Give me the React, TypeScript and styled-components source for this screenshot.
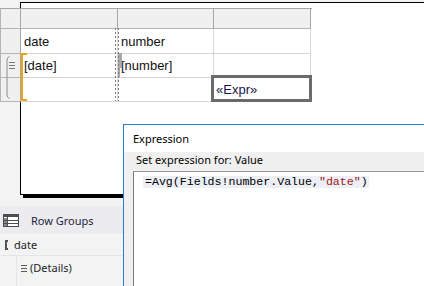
import { FC } from 'react';
import styled, { createGlobalStyle } from 'styled-components';

const GlobalStyle = createGlobalStyle`
  html, body {
    margin: 0;
    padding: 0;
  }
  body {
    width: 424px;
    height: 286px;
    overflow: hidden;
    background: #f3f3f3;
    font-family: 'Noto Sans', 'Open Sans', sans-serif;
  }
`;

type Tone = 'handle' | 'body';

const MenuLines: FC<{ color?: string }> = ({ color = '#7a7a7a' }) => (
  <svg width="6" height="7" viewBox="0 0 6 7">
    <rect x="0" y="0" width="6" height="1" fill={color} />
    <rect x="0" y="3" width="6" height="1" fill={color} />
    <rect x="0" y="6" width="6" height="1" fill={color} />
  </svg>
);

const GroupsIcon = () => (
  <svg width="16" height="13" viewBox="0 0 16 13">
    <rect x="0.5" y="0.5" width="15" height="12" fill="#fff" stroke="#4d4d4d" />
    <rect x="0" y="0" width="16" height="3" fill="#4d4d4d" />
    <rect x="4" y="0" width="1" height="13" fill="#4d4d4d" />
    <rect x="0" y="6" width="16" height="1" fill="#4d4d4d" />
    <rect x="0" y="9" width="16" height="1" fill="#4d4d4d" />
    <rect x="1" y="4" width="3" height="2" fill="#8a8a8a" />
    <rect x="1" y="7" width="3" height="2" fill="#8a8a8a" />
    <rect x="1" y="10" width="3" height="2" fill="#8a8a8a" />
  </svg>
);

const App = () => (
  <Screen>
    <GlobalStyle />
    <Surface>
      <ReportBody>
        <Tablix>
          <Cell $tone="handle" />
          <Cell $tone="handle" />
          <Cell $tone="handle" />
          <Cell $tone="handle" />

          <Cell $tone="handle" />
          <Cell $tone="body">date</Cell>
          <Cell $tone="body">number</Cell>
          <Cell $tone="body" />

          <Cell $tone="handle">
            <HandleIcon>
              <MenuLines />
            </HandleIcon>
          </Cell>
          <Cell $tone="body">[date]</Cell>
          <Cell $tone="body">[number]</Cell>
          <Cell $tone="body" />

          <Cell $tone="handle" />
          <Cell $tone="body" />
          <Cell $tone="body" />
          <ExprCell>«Expr»</ExprCell>

          <RowBracket width="6" height="43" viewBox="0 0 6 43">
            <path d="M4.5 0.5 Q2 1.5 2 4 L2 39 Q2 41.5 4.5 42.5" fill="none" stroke="#8c8c8c" />
          </RowBracket>
          <GroupBracket />
          <ColumnMarker />
          <DottedGuide $left={114} />
          <DottedGuide $left={117} />
          <SelectionFrame />
        </Tablix>
      </ReportBody>
    </Surface>

    <GroupsPanel>
      <PanelHeader>
        <GroupsIcon />
        <PanelTitle>Row Groups</PanelTitle>
      </PanelHeader>
      <GroupRow>
        <GroupGlyph />
        <GroupLabel>date</GroupLabel>
      </GroupRow>
      <DetailsRow>
        <MenuLines color="#5a5a5a" />
        <GroupLabel>(Details)</GroupLabel>
      </DetailsRow>
    </GroupsPanel>

    <Dialog>
      <DialogTitle>Expression</DialogTitle>
      <DialogContent>
        <FieldLabel>Set expression for: Value</FieldLabel>
        <CodeBox>
          <CodeLine>
            =Avg(Fields!number.Value,<CodeString>"date"</CodeString>)
          </CodeLine>
        </CodeBox>
      </DialogContent>
    </Dialog>
  </Screen>
);

export default App;

const Screen = styled.div`
  position: relative;
  width: 424px;
  height: 286px;
  overflow: hidden;
  display: flex;
  flex-direction: column;
  background: #f3f3f3;
`;

const Surface = styled.div`
  flex: none;
  height: 206px;
  box-sizing: border-box;
  padding: 2px 0 0 20px;
`;

const ReportBody = styled.div`
  width: 520px;
  height: 193px;
  box-sizing: border-box;
  border: 1px solid #000;
  box-shadow: 3px 3px 0 #000;
  background: #fff;
  padding-top: 5px;
`;

const Tablix = styled.div`
  position: relative;
  margin-left: -21px;
  width: 311px;
  display: grid;
  grid-template-columns: 20px 97px 96px 97px;
  grid-template-rows: 20px 25px 24px 24px;
  border-top: 1px solid #a6a6a6;
  border-left: 1px solid #b4b4b4;
  font-family: 'Liberation Sans', Arial, sans-serif;
  font-size: 13px;
  color: #111;
`;

const Cell = styled.div<{ $tone: Tone }>`
  box-sizing: border-box;
  display: flex;
  align-items: center;
  padding-left: 3px;
  white-space: nowrap;
  background: ${p => (p.$tone === 'handle' ? '#f0f0f0' : '#fff')};
  border-right: 1px solid ${p => (p.$tone === 'handle' ? '#a6a6a6' : '#d6d6d6')};
  border-bottom: 1px solid ${p => (p.$tone === 'handle' ? '#b4b4b4' : '#d6d6d6')};
`;

const ExprCell = styled(Cell).attrs({ $tone: 'body' as Tone })`
  padding-left: 2px;
  color: #14144a;
`;

const HandleIcon = styled.span`
  display: flex;
  margin-left: 5px;
`;

const RowBracket = styled.svg`
  position: absolute;
  left: 4px;
  top: 47px;
`;

const GroupBracket = styled.div`
  position: absolute;
  left: 20px;
  top: 44px;
  width: 6px;
  height: 48px;
  box-sizing: border-box;
  border: 2px solid #eea319;
  border-right: none;
`;

const ColumnMarker = styled.div`
  position: absolute;
  left: 117px;
  top: 44px;
  width: 4px;
  height: 24px;
  background: linear-gradient(to right, #a8a8a8 0 2px, transparent 2px) no-repeat,
    linear-gradient(#a8a8a8, #a8a8a8) 0 0 / 4px 15px no-repeat;
`;

const DottedGuide = styled.div<{ $left: number }>`
  position: absolute;
  left: ${p => p.$left}px;
  top: 19px;
  width: 1px;
  height: 73px;
  background: repeating-linear-gradient(to bottom, #7c7c7c 0 2px, transparent 2px 4px);
`;

const SelectionFrame = styled.div`
  position: absolute;
  left: 210px;
  top: 66px;
  width: 101px;
  height: 27px;
  box-sizing: border-box;
  border: 3px solid #6b6b6b;
`;

const GroupsPanel = styled.div`
  flex: 1;
  display: flex;
  flex-direction: column;
  background: #f3f3f3;
  font-size: 11px;
  color: #1e1e1e;
`;

const PanelHeader = styled.div`
  height: 28px;
  display: flex;
  align-items: center;
  padding-left: 3px;
  background: #ececf0;
  border-bottom: 1px solid #f8f8f8;
`;

const PanelTitle = styled.span`
  margin-left: 12px;
  color: #1e1e3a;
`;

const GroupRow = styled.div`
  height: 20px;
  display: flex;
  align-items: center;
  padding-left: 5px;
  border-bottom: 1px solid #e4e4ea;
`;

const GroupGlyph = styled.span`
  width: 3px;
  height: 10px;
  box-sizing: border-box;
  border: 2px solid #555;
  border-right: none;
`;

const GroupLabel = styled.span`
  margin-left: 6px;
  line-height: 16px;
`;

const DetailsRow = styled.div`
  flex: 1;
  display: flex;
  align-items: center;
  margin-left: 16px;
  padding: 0 0 6px 4px;
  border-left: 1px solid #e4e4ea;
  & > span {
    margin-left: 3px;
  }
`;

const Dialog = styled.div`
  position: absolute;
  left: 123px;
  top: 124px;
  width: 320px;
  height: 180px;
  border: 1px solid #2b7bd3;
  display: flex;
  flex-direction: column;
  background: #f0f0f0;
`;

const DialogTitle = styled.div`
  height: 27px;
  display: flex;
  align-items: center;
  padding-left: 9px;
  background: #fff;
  font-size: 11px;
  color: #000;
`;

const DialogContent = styled.div`
  flex: 1;
  padding-left: 9px;
  display: flex;
  flex-direction: column;
`;

const FieldLabel = styled.div`
  margin: 0 0 3px 3px;
  height: 16px;
  line-height: 16px;
  font-size: 11px;
  color: #000;
`;

const CodeBox = styled.div`
  flex: 1;
  border: 1px solid #7a7a7a;
  border-top-color: #9a9a9a;
  background: #fff;
  padding: 3px 0 0 9px;
  font-size: 11.6px;
  line-height: 12px;
`;

const CodeLine = styled.span`
  display: inline-block;
  padding: 0 1px 0 2px;
  line-height: 12px;
  background: #eceff6;
  font-family: 'Liberation Mono', 'Courier New', monospace;
  font-size: 11.6px;
  color: #000;
  white-space: pre;
`;

const CodeString = styled.span`
  color: #a31515;
`;
